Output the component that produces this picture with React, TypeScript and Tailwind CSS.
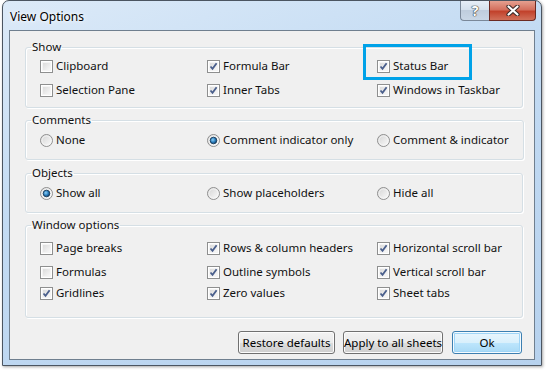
import * as React from 'react';

// Win7 style "View Options" dialog

const FONT = "font-['Segoe_UI','Noto_Sans',sans-serif]";

function CheckBox({ checked }: { checked: boolean }) {
  return (
    <span className="relative inline-block h-[13px] w-[13px] shrink-0 border border-[#8e8f8f] bg-white">
      <span className="absolute inset-[1px] bg-gradient-to-br from-[#d8d8d8] to-[#fbfbfb] shadow-[inset_0_0_0_1px_#f4f4f4]" />
      {checked && (
        <svg className="absolute left-[1px] top-[1px]" width="9" height="9" viewBox="0 0 9 9">
          <path d="M1.5 4.5 L3.5 6.8 L7.6 1.2" fill="none" stroke="#4a5f8c" strokeWidth="1.8" />
        </svg>
      )}
    </span>
  );
}

function Radio({ checked }: { checked: boolean }) {
  return (
    <svg width="13" height="13" viewBox="0 0 13 13" className="shrink-0">
      <defs>
        <linearGradient id="rbg" x1="0" y1="0" x2="1" y2="1">
          <stop offset="0" stopColor="#d2d2d2" />
          <stop offset="1" stopColor="#fdfdfd" />
        </linearGradient>
        <radialGradient id="rdot" cx="0.4" cy="0.4" r="0.6">
          <stop offset="0" stopColor="#8fd0f5" />
          <stop offset="0.6" stopColor="#2a7fc0" />
          <stop offset="1" stopColor="#16456f" />
        </radialGradient>
      </defs>
      <circle cx="6.5" cy="6.5" r="6" fill="url(#rbg)" stroke="#8f8f8f" />
      <circle cx="6.5" cy="6.5" r="4.6" fill="none" stroke="#f6f6f6" strokeWidth="0.8" />
      {checked && <circle cx="6.5" cy="6.5" r="3.3" fill="url(#rdot)" stroke="#1b3d5c" strokeWidth="0.9" />}
    </svg>
  );
}

function Option({
  label,
  checked,
  radio,
  highlight,
}: {
  label: string;
  checked: boolean;
  radio?: boolean;
  highlight?: boolean;
}) {
  return (
    <div className="relative flex h-[20px] items-center gap-[3px] whitespace-nowrap">
      {radio ? <Radio checked={checked} /> : <CheckBox checked={checked} />}
      <span className="leading-[16px]">{label}</span>
      {highlight && (
        <div className="pointer-events-none absolute -left-[14px] -top-[12px] h-[36px] w-[109px] border-[3px] border-[#00a2e8]" />
      )}
    </div>
  );
}

function Group({
  title,
  className,
  children,
}: {
  title: string;
  className?: string;
  children: React.ReactNode;
}) {
  return (
    <fieldset className={`rounded-[3px] border border-[#d5dfe5] shadow-[inset_1px_1px_0_#fff,1px_1px_0_#fff] ${className ?? ''}`}>
      <legend className="ml-[5px] px-[1px] text-[11.5px] leading-[14px]">{title}</legend>
      {children}
    </fieldset>
  );
}

const cols = 'grid grid-cols-[167px_170px_1fr] px-[14px]';

function Button({ label, className }: { label: string; className?: string }) {
  return (
    <button
      className={`h-[23px] whitespace-nowrap rounded-[3px] border border-[#707070] bg-[linear-gradient(#f2f2f2_0%,#ebebeb_50%,#dddddd_50%,#cfcfcf_100%)] text-[11.5px] leading-[16px] text-black shadow-[inset_0_0_0_1px_#fcfcfc] ${className ?? ''}`}
    >
      {label}
    </button>
  );
}

export default function App() {
  return (
    <div className={`h-[370px] w-[548px] bg-white ${FONT} text-[11.5px] text-[#111]`}>
      <div className="ml-[2px] flex h-[366px] w-[540px] flex-col rounded-t-[7px] border border-[#4b5561] bg-[linear-gradient(160deg,#dceaf8_0%,#c3dbf3_40%,#b7d2ee_100%)] px-[6px] pb-[5px] shadow-[1px_1px_3px_rgba(0,0,0,0.35)]">
        {/* Title bar */}
        <div className="-ml-[6px] -mr-[6px] flex h-[29px] items-start justify-between pl-[7px] pr-[5px]">
          <span className="pt-[8px] text-[12px] leading-[16px] text-black [text-shadow:0_0_6px_#fff,0_0_3px_#fff]">
            View Options
          </span>
          <div className="flex h-[20px]">
            <div className="flex w-[29px] items-center justify-center rounded-bl-[4px] border border-r-0 border-t-0 border-[#7a8899] bg-[linear-gradient(#e6eef7_0%,#d3dfec_50%,#bfcddd_50%,#c9d7e6_100%)]">
              <span className="text-[14px] font-bold leading-[14px] text-white [text-shadow:0_0_1px_#333,0_0_1px_#333,0_0_1px_#333]">?</span>
            </div>
            <div className="flex w-[47px] items-center justify-center rounded-br-[4px] border border-t-0 border-[#6b2a22] bg-[linear-gradient(#e5a090_0%,#d4705e_45%,#c2422c_55%,#d0705a_100%)]">
              <svg width="14" height="11" viewBox="0 0 14 11">
                <path d="M2.5 1.5 L11.5 9.5 M11.5 1.5 L2.5 9.5" stroke="#3a2a28" strokeWidth="4.2" strokeLinecap="round" />
                <path d="M2.5 1.5 L11.5 9.5 M11.5 1.5 L2.5 9.5" stroke="#fff" strokeWidth="2.2" strokeLinecap="round" />
              </svg>
            </div>
          </div>
        </div>

        {/* Content */}
        <div className="flex flex-1 flex-col border border-[#6f7f8f] bg-[#f0f0f0] pl-[15px] pr-[11px] pt-[9px]">
          <Group title="Show">
            <div className={`${cols} gap-y-[4px] pb-[7px] pt-[2px]`}>
              <Option label="Clipboard" checked={false} />
              <Option label="Formula Bar" checked />
              <Option label="Status Bar" checked highlight />
              <Option label="Selection Pane" checked={false} />
              <Option label="Inner Tabs" checked />
              <Option label="Windows in Taskbar" checked />
            </div>
          </Group>

          <Group title="Comments" className="mt-[5px]">
            <div className={`${cols} pb-[9px] pt-[3px]`}>
              <Option label="None" checked={false} radio />
              <Option label="Comment indicator only" checked radio />
              <Option label="Comment & indicator" checked={false} radio />
            </div>
          </Group>

          <Group title="Objects" className="mt-[6px]">
            <div className={`${cols} pb-[9px] pt-[3px]`}>
              <Option label="Show all" checked radio />
              <Option label="Show placeholders" checked={false} radio />
              <Option label="Hide all" checked={false} radio />
            </div>
          </Group>

          <Group title="Window options" className="mt-[5px]">
            <div className={`${cols} pb-[14px] pt-[6px]`}>
              <Option label="Page breaks" checked={false} />
              <Option label="Rows & column headers" checked />
              <Option label="Horizontal scroll bar" checked />
              <div className="col-span-3 mt-[4px] grid grid-cols-[167px_170px_1fr]">
                <Option label="Formulas" checked={false} />
                <Option label="Outline symbols" checked />
                <Option label="Vertical scroll bar" checked />
              </div>
              <div className="col-span-3 mt-[1px] grid grid-cols-[167px_170px_1fr]">
                <Option label="Gridlines" checked />
                <Option label="Zero values" checked />
                <Option label="Sheet tabs" checked />
              </div>
            </div>
          </Group>

          <div className="mr-[1px] mt-[13px] flex justify-end">
            <Button label="Restore defaults" className="w-[97px]" />
            <Button label="Apply to all sheets" className="ml-[8px] w-[100px]" />
            <button className="ml-[9px] h-[23px] w-[70px] rounded-[3px] border border-[#3c7fb1] bg-[linear-gradient(#eaf6fd_0%,#d9f0fc_50%,#bee6fd_50%,#a7d9f5_100%)] text-[11.5px] leading-[16px] text-black shadow-[inset_0_0_0_1px_#f4fbff,inset_0_0_0_2px_#9fd5f7]">
              Ok
            </button>
          </div>
        </div>
      </div>
    </div>
  );
}
